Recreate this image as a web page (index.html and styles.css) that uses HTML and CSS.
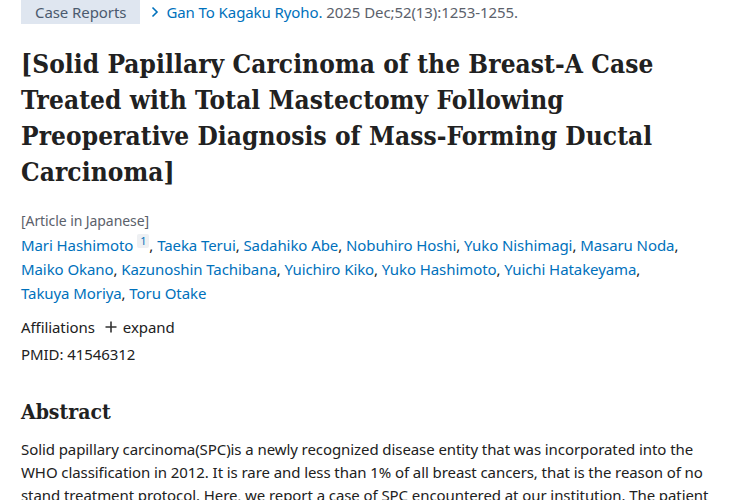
FILE: index.html
```html
<!DOCTYPE html>
<html lang="en">
<head>
<meta charset="utf-8">
<link rel="stylesheet" href="styles.css">
</head>
<body>
<main class="article">
  <div class="meta-row">
    <span class="tag">Case Reports</span>
    <svg class="chev" width="10" height="12" viewBox="0 0 10 12"><path d="M2.5 1.5 L7 6 L2.5 10.5" fill="none" stroke="#0071bc" stroke-width="1.6"/></svg>
    <span class="citation"><a class="link" href="#">Gan To Kagaku Ryoho.</a> 2025 Dec;52(13):1253-1255.</span>
  </div>

  <h1 class="title">[Solid Papillary Carcinoma of the Breast-A Case Treated with Total Mastectomy Following Preoperative Diagnosis of Mass-Forming Ductal Carcinoma]</h1>

  <div class="authors-block">
    <div class="lang">[Article in Japanese]</div>
    <div class="authors">
      <a class="link" href="#">Mari Hashimoto</a> <sup class="aff">1</sup>, <a class="link" href="#">Taeka Terui</a>, <a class="link" href="#">Sadahiko Abe</a>, <a class="link" href="#">Nobuhiro Hoshi</a>, <a class="link" href="#">Yuko Nishimagi</a>, <a class="link" href="#">Masaru Noda</a>,<br>
      <a class="link" href="#">Maiko Okano</a>, <a class="link" href="#">Kazunoshin Tachibana</a>, <a class="link" href="#">Yuichiro Kiko</a>, <a class="link" href="#">Yuko Hashimoto</a>, <a class="link" href="#">Yuichi Hatakeyama</a>,<br>
      <a class="link" href="#">Takuya Moriya</a>, <a class="link" href="#">Toru Otake</a>
    </div>
  </div>

  <div class="aff-row">
    <span>Affiliations</span>
    <span class="expand"><svg width="12" height="12" viewBox="0 0 12 12"><path d="M6 0.5 V11.5 M0.5 6 H11.5" stroke="#333" stroke-width="1.6"/></svg> expand</span>
  </div>
  <div class="pmid">PMID: 41546312</div>

  <h2 class="abs-title">Abstract</h2>
  <p class="abstract">Solid papillary carcinoma(SPC)is a newly recognized disease entity that was incorporated into the WHO classification in 2012. It is rare and less than 1% of all breast cancers, that is the reason of no stand treatment protocol. Here, we report a case of SPC encountered at our institution. The patient was a woman in her 70s.</p>
</main>
</body>
</html>
```

FILE: styles.css
```css
html, body {
  margin: 0;
  padding: 0;
  background: #fff;
}
body {
  font-family: "Noto Sans", "Open Sans", sans-serif;
  color: #212121;
  font-size: 15px;
  letter-spacing: -0.08px;
}
.article {
  padding: 0 0 0 21px;
  width: 700px;
}
.link {
  color: #0071bc;
  text-decoration: none;
}
.meta-row {
  display: flex;
  align-items: center;
  height: 24px;
}
.tag {
  background: #dfe6f0;
  color: #4b5a6e;
  height: 24px;
  line-height: 24px;
  padding: 0 14px;
  font-size: 15px;
}
.chev {
  margin-left: 10px;
  margin-right: 6px;
}
.citation {
  color: #5b616b;
}
.title {
  font-family: "DejaVu Serif Condensed", "DejaVu Serif", serif;
  font-weight: bold;
  font-size: 26px;
  line-height: 36px;
  margin: 22px 0 0 0;
  color: #212121;
  width: 680px;
  letter-spacing: 0.08px;
}
.authors-block {
  margin-top: 19px;
  line-height: 24px;
}
.lang {
  color: #5b616b;
  font-size: 14px;
}
.authors {
  font-size: 15px;
}
.aff {
  display: inline-block;
  font-size: 11px;
  line-height: 14px;
  background: #eef0f3;
  color: #0071bc;
  padding: 0 3px;
  border-radius: 2px;
  vertical-align: 6px;
}
.aff-row {
  margin-top: 10px;
  display: flex;
  gap: 10px;
  line-height: 24px;
  font-size: 15px;
}
.expand {
  display: inline-flex;
  align-items: center;
  gap: 6px;
}
.pmid {
  line-height: 24px;
  margin-top: 3px;
  font-size: 15px;
}
.abs-title {
  font-family: "DejaVu Serif Condensed", "DejaVu Serif", serif;
  font-weight: bold;
  font-size: 21px;
  line-height: 28px;
  margin: 32px 0 0 0;
  letter-spacing: 0;
}
.abstract {
  margin: 12px 0 0 0;
  line-height: 23px;
  font-size: 15px;
  width: 700px;
}
```
